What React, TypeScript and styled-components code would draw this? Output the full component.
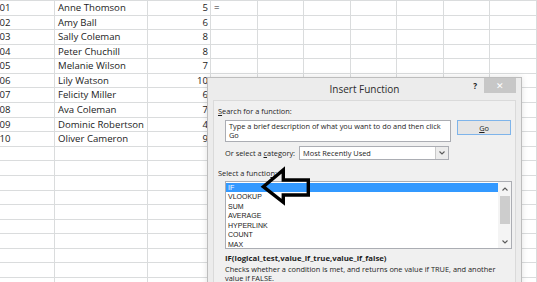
import { FC, Fragment } from 'react'
import styled, { createGlobalStyle } from 'styled-components'

const GlobalStyle = createGlobalStyle`
  html, body {
    margin: 0;
    padding: 0;
    background: #ffffff;
    overflow: hidden;
  }
`

const Screen = styled.div`
  position: relative;
  width: 537px;
  height: 282px;
  overflow: hidden;
  background: #ffffff;
`

const Sheet = styled.div`
  display: grid;
  grid-template-columns: 64px 93px 63px repeat(7, 46.5px);
  grid-auto-rows: 14.58px;
  margin-left: -9px;
  border-top: 1px solid #dadcdd;
  font-family: 'Open Sans', 'Noto Sans', sans-serif;
  font-size: 9.6px;
  color: #1c1c1c;
`

const Cell = styled.div<{ $align?: 'left' | 'right' }>`
  box-sizing: border-box;
  border-right: 1px solid #dadcdd;
  border-bottom: 1px solid #dadcdd;
  display: flex;
  align-items: center;
  justify-content: ${({ $align }) => ($align === 'right' ? 'flex-end' : 'flex-start')};
  padding: 0 2px 0 3px;
  white-space: nowrap;
  overflow: hidden;
  line-height: 1;
`

const Dialog = styled.div`
  position: absolute;
  left: 207px;
  top: 77px;
  width: 315px;
  height: 230px;
  box-sizing: border-box;
  background: #ececec;
  border: 1px solid #bdbdbd;
  box-shadow: 0 0 6px rgba(0, 0, 0, 0.12);
  padding: 0 5px;
  display: flex;
  flex-direction: column;
  font-family: 'Open Sans', 'Noto Sans', sans-serif;
  color: #1e1e1e;
`

const TitleBar = styled.div`
  display: grid;
  grid-template-columns: 1fr auto 1fr;
  height: 22px;
`

const Title = styled.div`
  grid-column: 2;
  align-self: center;
  font-size: 10px;
  color: #2b2b2b;
`

const Controls = styled.div`
  grid-column: 3;
  justify-self: end;
  display: flex;
  align-items: flex-start;
  gap: 7px;
`

const Help = styled.span`
  font-size: 8px;
  font-weight: 700;
  line-height: 15px;
  color: #222;
`

const CloseButton = styled.div`
  width: 32px;
  height: 15px;
  background: #c7c7c7;
  color: #ffffff;
  font-size: 9px;
  display: flex;
  align-items: center;
  justify-content: center;
`

const Panel = styled.div`
  flex: 1;
  background: #f0f0f0;
  border: 1px solid #dadada;
  padding: 5px 4px 0 4px;
  font-size: 7.4px;
`

const Label = styled.div<{ $gap?: number }>`
  line-height: 10px;
  margin-top: ${({ $gap }) => $gap ?? 0}px;
  white-space: nowrap;
`

const Key = styled.span`
  text-decoration: underline;
  text-underline-offset: 1px;
`

const SearchRow = styled.div`
  display: flex;
  align-items: flex-start;
  gap: 6px;
  margin-top: 4px;
  padding-left: 7px;
`

const SearchBox = styled.div`
  box-sizing: border-box;
  width: 227px;
  height: 22px;
  background: #ffffff;
  border: 1px solid #abadb3;
  padding: 1px 3px;
  line-height: 9px;
`

const GoButton = styled.div`
  box-sizing: border-box;
  width: 54px;
  height: 15px;
  background: #e5e5e5;
  border: 1px solid #7eb4ea;
  display: flex;
  align-items: center;
  justify-content: center;
`

const CategoryRow = styled.div`
  display: flex;
  align-items: center;
  margin-top: 4px;
  padding-left: 7px;
  gap: 4px;
`

const Select = styled.div`
  box-sizing: border-box;
  width: 150px;
  height: 14px;
  background: #ffffff;
  border: 1px solid #abadb3;
  display: flex;
  align-items: center;
  padding-left: 3px;
`

const SelectValue = styled.span`
  flex: 1;
`

const DropButton = styled.div`
  width: 12px;
  height: 12px;
  background: #ececec;
  border-left: 1px solid #c9c9c9;
  display: flex;
  align-items: center;
  justify-content: center;
`

const ListBox = styled.div`
  box-sizing: border-box;
  display: flex;
  width: 287px;
  height: 68px;
  margin: 3px 0 0 7px;
  background: #ffffff;
  border: 1px solid #abadb3;
  font-family: 'Liberation Sans', Arial, sans-serif;
  font-size: 7px;
`

const Items = styled.div`
  flex: 1;
  padding-top: 0.7px;
`

const Item = styled.div<{ $selected?: boolean }>`
  height: 9.5px;
  line-height: 9.5px;
  padding-left: 2px;
  background: ${({ $selected }) => ($selected ? '#3399ff' : 'transparent')};
  color: ${({ $selected }) => ($selected ? '#ffffff' : '#1a1a1a')};
`

const ScrollBar = styled.div`
  width: 13px;
  background: #f4f4f4;
  display: flex;
  flex-direction: column;
  align-items: center;
`

const ScrollArrow = styled.div`
  height: 13px;
  display: flex;
  align-items: center;
  justify-content: center;
`

const Thumb = styled.div`
  width: 10px;
  height: 28px;
  margin-top: 1px;
  background: #cdcdcd;
`

const Track = styled.div`
  flex: 1;
`

const Syntax = styled.div`
  margin: 4px 0 0 7px;
  font-weight: 700;
  font-size: 7.8px;
  line-height: 10px;
  white-space: nowrap;
`

const Description = styled.div`
  margin: 2px 0 0 7px;
  width: 290px;
  line-height: 8.8px;
`

const Pointer = styled.svg`
  position: absolute;
  left: 258px;
  top: 165px;
  overflow: visible;
`

const Chevron: FC<{ up?: boolean }> = ({ up }) => (
  <svg width="6" height="4" viewBox="0 0 6 4">
    <polyline
      points={up ? '0.5,3.5 3,1 5.5,3.5' : '0.5,0.5 3,3 5.5,0.5'}
      fill="none"
      stroke="#5a5a5a"
      strokeWidth="1.1"
    />
  </svg>
)

const students: [string, string, number][] = [
  ['001', 'Anne Thomson', 5],
  ['002', 'Amy Ball', 6],
  ['003', 'Sally Coleman', 8],
  ['004', 'Peter Chuchill', 8],
  ['005', 'Melanie Wilson', 7],
  ['006', 'Lily Watson', 10],
  ['007', 'Felicity Miller', 6],
  ['008', 'Ava Coleman', 7],
  ['009', 'Dominic Robertson', 4],
  ['010', 'Oliver Cameron', 9]
]

const functions = ['IF', 'VLOOKUP', 'SUM', 'AVERAGE', 'HYPERLINK', 'COUNT', 'MAX']

const EMPTY_ROWS = 10
const EXTRA_COLS = 7

const App: FC = () => {
  return (
    <Screen>
      <GlobalStyle />
      <Sheet>
        {students.map(([id, name, score], r) => (
          <Fragment key={id}>
            <Cell>{id}</Cell>
            <Cell>{name}</Cell>
            <Cell $align="right">{score}</Cell>
            {Array.from({ length: EXTRA_COLS }).map((_, c) => (
              <Cell key={c}>{r === 0 && c === 0 ? '=' : ''}</Cell>
            ))}
          </Fragment>
        ))}
        {Array.from({ length: EMPTY_ROWS * (EXTRA_COLS + 3) }).map((_, i) => (
          <Cell key={`e${i}`} />
        ))}
      </Sheet>

      <Dialog>
        <TitleBar>
          <Title>Insert Function</Title>
          <Controls>
            <Help>?</Help>
            <CloseButton>✕</CloseButton>
          </Controls>
        </TitleBar>
        <Panel>
          <Label>
            <Key>S</Key>earch for a function:
          </Label>
          <SearchRow>
            <SearchBox>Type a brief description of what you want to do and then click Go</SearchBox>
            <GoButton>
              <Key>G</Key>o
            </GoButton>
          </SearchRow>
          <CategoryRow>
            <span>
              Or select a <Key>c</Key>ategory:
            </span>
            <Select>
              <SelectValue>Most Recently Used</SelectValue>
              <DropButton>
                <Chevron />
              </DropButton>
            </Select>
          </CategoryRow>
          <Label $gap={8}>
            Select a functio<Key>n</Key>:
          </Label>
          <ListBox>
            <Items>
              {functions.map((fn, i) => (
                <Item key={fn} $selected={i === 0}>
                  {fn}
                </Item>
              ))}
            </Items>
            <ScrollBar>
              <ScrollArrow>
                <Chevron up />
              </ScrollArrow>
              <Thumb />
              <Track />
              <ScrollArrow>
                <Chevron />
              </ScrollArrow>
            </ScrollBar>
          </ListBox>
          <Syntax>IF(logical_test,value_if_true,value_if_false)</Syntax>
          <Description>
            Checks whether a condition is met, and returns one value if TRUE, and another value if FALSE.
          </Description>
        </Panel>
      </Dialog>

      <Pointer width="56" height="42" viewBox="0 0 56 42">
        <path
          d="M5.3 21.7 L25.3 5 L25.3 15 L50.3 15 L50.3 30 L25.3 30 L25.3 37.3 Z"
          fill="none"
          stroke="#000000"
          strokeWidth="3.4"
          strokeLinejoin="miter"
        />
      </Pointer>
    </Screen>
  )
}

export default App
